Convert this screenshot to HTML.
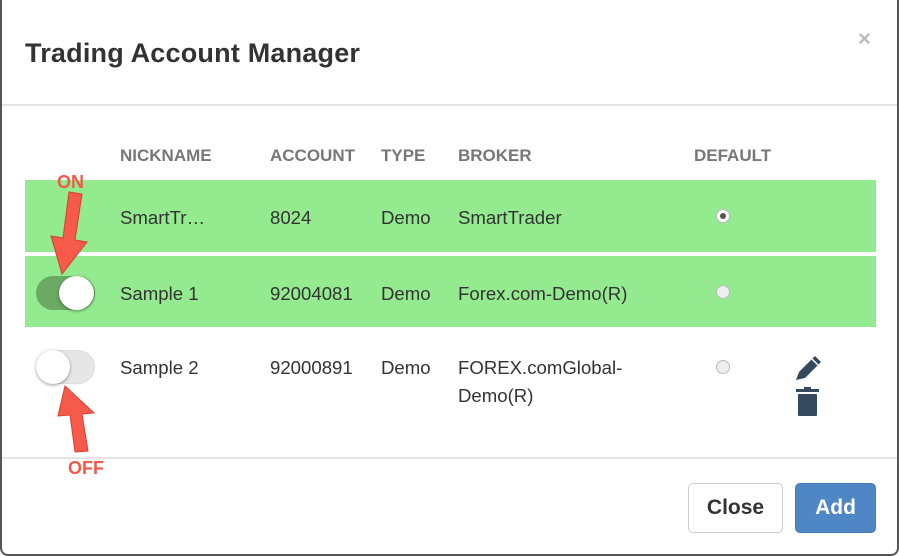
<!DOCTYPE html>
<html><head><style>
*{box-sizing:border-box;margin:0;padding:0}
body{width:899px;height:556px;background:#fff;font-family:"Liberation Sans",sans-serif;color:#333;position:relative;overflow:hidden}
.frame{position:absolute;left:0;top:0;width:899px;height:556px;border:2px solid #555;border-top:none;border-radius:0 0 8px 8px}
.t{position:absolute;font-size:18.6px;color:#333;white-space:nowrap}
.h{position:absolute;font-size:17px;font-weight:bold;color:#777;top:146px}
.g{position:absolute;left:25px;width:851px;background:#94ea8f}
.radio{position:absolute;width:14px;height:14px;border-radius:50%;border:1px solid #bbb;background:#eee}
.hr{position:absolute;left:2px;right:2px;height:2px;background:#e5e5e5}
.arrow{position:absolute}
</style></head><body>
<div class="frame"></div>
<div class="t" style="left:25px;top:38px;font-size:27px;font-weight:bold;color:#333;letter-spacing:0.2px">Trading Account Manager</div>
<div class="t" style="left:858px;top:26px;font-size:22px;color:#bbb;font-weight:bold">×</div>
<div class="hr" style="top:104px"></div>
<div class="h" style="left:120px">NICKNAME</div>
<div class="h" style="left:270px">ACCOUNT</div>
<div class="h" style="left:381px">TYPE</div>
<div class="h" style="left:458px">BROKER</div>
<div class="h" style="left:694px">DEFAULT</div>
<div class="g" style="top:180px;height:72px"></div>
<div class="g" style="top:256px;height:71px"></div>
<div class="t" style="left:120px;top:207px">SmartTr…</div>
<div class="t" style="left:270px;top:207px">8024</div>
<div class="t" style="left:381px;top:207px">Demo</div>
<div class="t" style="left:458px;top:207px">SmartTrader</div>
<div class="radio" style="left:716px;top:209px;background:#fff"><div style="width:6px;height:6px;border-radius:50%;background:#555;margin:3px"></div></div>
<div class="t" style="left:120px;top:283px">Sample 1</div>
<div class="t" style="left:270px;top:283px">92004081</div>
<div class="t" style="left:381px;top:283px">Demo</div>
<div class="t" style="left:458px;top:283px">Forex.com-Demo(R)</div>
<div class="radio" style="left:716px;top:285px"></div>
<div class="t" style="left:120px;top:357px">Sample 2</div>
<div class="t" style="left:270px;top:357px">92000891</div>
<div class="t" style="left:381px;top:357px">Demo</div>
<div class="t" style="left:458px;line-height:28px;top:354px">FOREX.comGlobal-<br>Demo(R)</div>
<div class="radio" style="left:716px;top:360px"></div>
<div style="position:absolute;left:36px;top:276px;width:59px;height:34px;border-radius:17px;background:#6aaa64"></div>
<div style="position:absolute;left:59px;top:276px;width:35px;height:34px;border-radius:50%;background:#fff;box-shadow:0 1px 3px rgba(0,0,0,.4)"></div>
<div style="position:absolute;left:36px;top:350px;width:59px;height:34px;border-radius:17px;background:#e6e6e6;border:1px solid #ddd"></div>
<div style="position:absolute;left:36px;top:350px;width:34px;height:34px;border-radius:50%;background:#fff;box-shadow:0 1px 3px rgba(0,0,0,.4)"></div>
<div class="t" style="left:57px;top:172px;font-size:18px;font-weight:bold;color:#f05a4a">ON</div>
<div class="t" style="left:68px;top:458px;font-size:18px;font-weight:bold;color:#f05a4a">OFF</div>
<svg class="arrow" style="left:40px;top:188px" width="50" height="90"><path d="M29 4 L42 6 L35 52 L47 54 L22 86 L11 48 L23 50 Z" fill="#f55a4a" stroke="#d84030" stroke-width="1"/></svg>
<svg class="arrow" style="left:55px;top:385px" width="50" height="70"><path d="M10 1 L39 28 L27 29 L33 66 L20 67 L15 30 L3 31 Z" fill="#f55a4a" stroke="#d84030" stroke-width="1"/></svg>
<svg style="position:absolute;left:793px;top:354px" width="30" height="30"><path d="M3 26 L6 18 L22 2 L28 8 L12 24 Z" fill="#34495e"/><path d="M19 5 L25 11" stroke="#fff" stroke-width="1.5"/></svg>
<svg style="position:absolute;left:795px;top:387px" width="26" height="30"><rect x="1" y="2" width="23" height="3" fill="#34495e"/><rect x="9" y="0" width="7" height="3" fill="#34495e"/><rect x="3" y="7" width="19" height="22" rx="1" fill="#34495e"/></svg>
<div class="hr" style="top:457px"></div>
<div style="position:absolute;left:688px;top:483px;width:95px;height:50px;border:1px solid #ccc;border-radius:5px;font-size:21px;font-weight:bold;color:#333;text-align:center;line-height:48px">Close</div>
<div style="position:absolute;left:795px;top:483px;width:81px;height:50px;background:#4f86c6;border:1px solid #4178b8;border-radius:5px;font-size:21px;font-weight:bold;color:#fff;text-align:center;line-height:48px">Add</div>
</body></html>
